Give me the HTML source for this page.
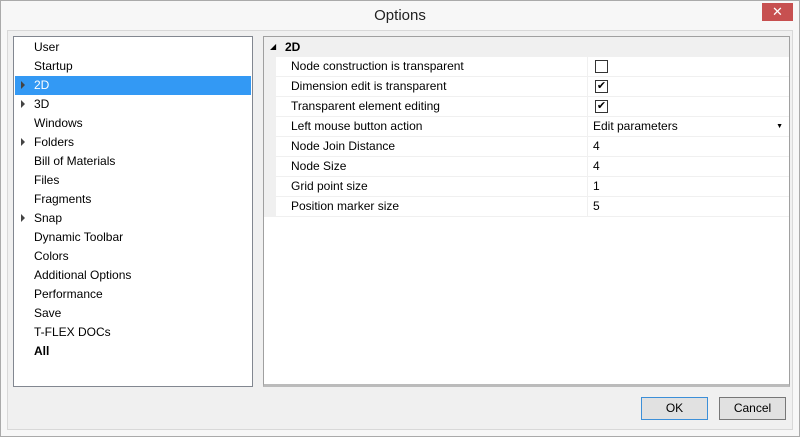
<!DOCTYPE html>
<html><head><style>
*{margin:0;padding:0;box-sizing:border-box}
body{width:800px;height:437px;background:#f7f7f7;font-family:"Liberation Sans",sans-serif;font-size:12px;color:#000;position:relative;overflow:hidden}
.frame{position:absolute;left:0;top:0;width:800px;height:437px;border:1px solid #aaa}
.title{position:absolute;left:0;width:800px;top:7px;text-align:center;font-size:15px;color:#222}
.close{position:absolute;left:762px;top:3px;width:31px;height:18px;background:#c75050;color:#fff;text-align:center;font-size:13px;line-height:18px}
.client{position:absolute;left:7px;top:30px;width:786px;height:400px;background:#f0f0f0;border:1px solid #d8d8d8}
.left{position:absolute;left:13px;top:36px;width:240px;height:351px;background:#fff;border:1px solid #828790}
.item{position:absolute;left:20px;height:19px;line-height:19px}
.sel{position:absolute;left:1px;top:39px;width:236px;height:19px;background:#3399f4}
.tri{position:absolute;left:7px;width:0;height:0;border-top:4px solid transparent;border-bottom:4px solid transparent;border-left:4px solid #444}
.right{position:absolute;left:263px;top:36px;width:527px;height:351px;background:#fff;border:1px solid #a0a0a0;border-bottom:3px solid #bbb}
.hdr{position:absolute;left:0;top:0;width:525px;height:20px;background:#f0f0f0;font-weight:bold;line-height:20px}
.gut{position:absolute;left:0;top:20px;width:12px;height:160px;background:#f0f0f0}
.row{position:absolute;left:12px;width:513px;height:20px;border-bottom:1px solid #f0f0f0;line-height:19px}
.row .n{position:absolute;left:15px}
.row .v{position:absolute;left:311px;top:0;height:20px;border-left:1px solid #f0f0f0;padding-left:5px;width:202px}
.cb{position:absolute;left:7px;top:3px;width:13px;height:13px;border:1px solid #333;background:#fff;font-size:11px;line-height:11px;text-align:center}
.btn{position:absolute;top:397px;width:67px;height:23px;background:#e1e1e1;border:1px solid #adadad;text-align:center;line-height:21px}
</style></head><body>
<div class="frame"></div>
<div class="title">Options</div>
<div class="close">✕</div>
<div class="client"></div>
<div class="left">
<div class="sel"></div>
<div class="item" style="top:1px">User</div>
<div class="item" style="top:20px">Startup</div>
<div class="tri" style="top:44px"></div><div class="item" style="top:39px;color:#fff">2D</div>
<div class="tri" style="top:63px"></div><div class="item" style="top:58px">3D</div>
<div class="item" style="top:77px">Windows</div>
<div class="tri" style="top:101px"></div><div class="item" style="top:96px">Folders</div>
<div class="item" style="top:115px">Bill of Materials</div>
<div class="item" style="top:134px">Files</div>
<div class="item" style="top:153px">Fragments</div>
<div class="tri" style="top:177px"></div><div class="item" style="top:172px">Snap</div>
<div class="item" style="top:191px">Dynamic Toolbar</div>
<div class="item" style="top:210px">Colors</div>
<div class="item" style="top:229px">Additional Options</div>
<div class="item" style="top:248px">Performance</div>
<div class="item" style="top:267px">Save</div>
<div class="item" style="top:286px">T-FLEX DOCs</div>
<div class="item" style="top:305px;font-weight:bold">All</div>
</div>
<div class="right">
<div class="hdr"><span style="position:absolute;left:6px;font-size:8px;font-weight:normal">◢</span><span style="position:absolute;left:21px">2D</span></div>
<div class="gut"></div>
<div class="row" style="top:20px"><span class="n">Node construction is transparent</span><div class="v"><div class="cb"></div></div></div>
<div class="row" style="top:40px"><span class="n">Dimension edit is transparent</span><div class="v"><div class="cb">✔</div></div></div>
<div class="row" style="top:60px"><span class="n">Transparent element editing</span><div class="v"><div class="cb">✔</div></div></div>
<div class="row" style="top:80px"><span class="n">Left mouse button action</span><div class="v">Edit parameters<span style="position:absolute;right:6px;font-size:7px">▼</span></div></div>
<div class="row" style="top:100px"><span class="n">Node Join Distance</span><div class="v">4</div></div>
<div class="row" style="top:120px"><span class="n">Node Size</span><div class="v">4</div></div>
<div class="row" style="top:140px"><span class="n">Grid point size</span><div class="v">1</div></div>
<div class="row" style="top:160px"><span class="n">Position marker size</span><div class="v">5</div></div>
</div>
<div class="btn" style="left:641px;border-color:#3c8fd8">OK</div>
<div class="btn" style="left:719px;border-color:#777">Cancel</div>
</body></html>
